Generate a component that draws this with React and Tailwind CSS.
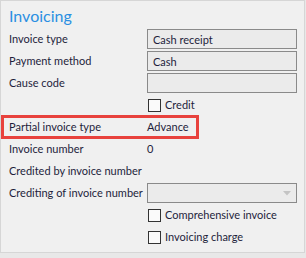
import React from 'react';

const font = { fontFamily: 'Lato, "Noto Sans", sans-serif' };

function Box({ children }) {
  return (
    <div className="h-[20px] w-[150px] border border-[#8a8a8a] bg-[#ebebeb] pl-[5px] flex items-center leading-none">
      {children}
    </div>
  );
}

function Check({ label }) {
  return (
    <div className="flex items-center gap-[4px] ml-[1px]">
      <span className="w-[13px] h-[13px] border border-[#333333] bg-[#fafafa]" />
      <span>{label}</span>
    </div>
  );
}

function Row({ label, children, highlight }) {
  return (
    <div className="relative h-[22px] flex items-center whitespace-nowrap">
      {highlight && (
        <div className="absolute left-[-8px] top-[-1px] w-[198px] h-[24px] border-[3px] border-[#e8423d]" />
      )}
      <div className="w-[138px] shrink-0">{label}</div>
      <div className="flex items-center">{children}</div>
    </div>
  );
}

export default function App() {
  return (
    <div className="w-[306px] h-[258px] bg-[#e8e8e8]" style={font}>
      <div className="w-[305px] h-[253px] border border-[#d6d6d6] bg-[#f0f0f0] pl-[8px] text-[11px] text-[#1e1e3c]">
        <div className="h-[27px] pt-[4px] leading-[22px] text-[16px] text-[#2a8fe2]">Invoicing</div>
        <Row label="Invoice type"><Box>Cash receipt</Box></Row>
        <Row label="Payment method"><Box>Cash</Box></Row>
        <Row label="Cause code"><Box /></Row>
        <Row label=""><Check label="Credit" /></Row>
        <Row label="Partial invoice type" highlight>Advance</Row>
        <Row label="Invoice number">0</Row>
        <Row label="Credited by invoice number" />
        <Row label="Crediting of invoice number">
          <div className="relative h-[20px] w-[150px] border border-[#8a8a8a] bg-[#ebebeb]">
            <svg className="absolute right-[5px] top-[7px]" width="8" height="5" viewBox="0 0 8 5">
              <path d="M0 0 L8 0 L4 4.5 Z" fill="#c4c4c4" />
            </svg>
          </div>
        </Row>
        <Row label=""><Check label="Comprehensive invoice" /></Row>
        <Row label=""><Check label="Invoicing charge" /></Row>
      </div>
    </div>
  );
}
